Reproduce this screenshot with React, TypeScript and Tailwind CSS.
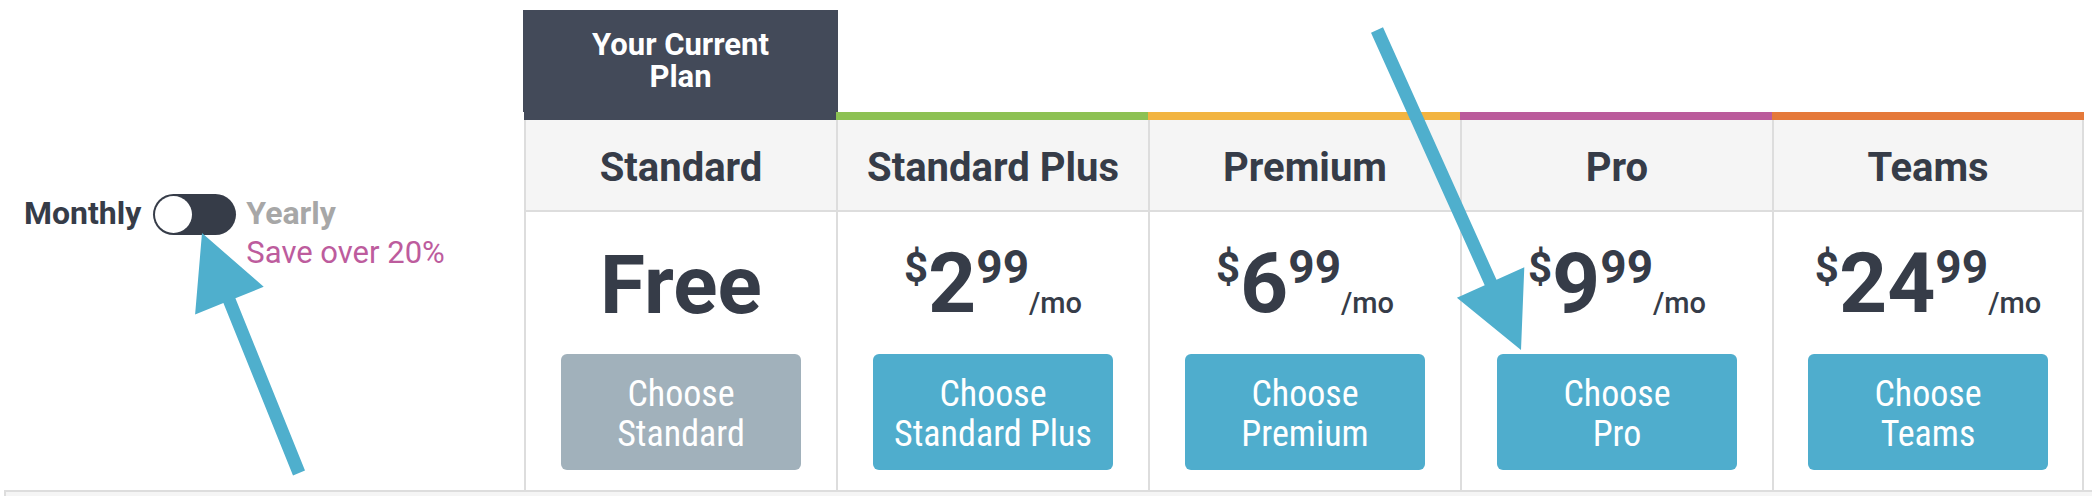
import React from 'react';

type Plan = {
  name: string;
  strip: string;
  dollars?: string;
  cents?: string;
  current?: boolean;
};

const plans: Plan[] = [
  { name: 'Standard', strip: 'bg-[#434a59]', current: true },
  { name: 'Standard Plus', strip: 'bg-[#8dc153]', dollars: '2', cents: '99' },
  { name: 'Premium', strip: 'bg-[#f2b441]', dollars: '6', cents: '99' },
  { name: 'Pro', strip: 'bg-[#bb5b9b]', dollars: '9', cents: '99' },
  { name: 'Teams', strip: 'bg-[#e5793a]', dollars: '24', cents: '99' },
];

function Price({ plan }: { plan: Plan }) {
  if (!plan.dollars) {
    return (
      <div className="flex h-[84px] items-start justify-center">
        <span className="mt-[2px] text-[82px] font-bold leading-none">Free</span>
      </div>
    );
  }
  return (
    <div className="flex h-[84px] items-start justify-center leading-none">
      <span className="mt-[5px] text-[42px] font-bold">$</span>
      <span className="text-[84px] font-bold">{plan.dollars}</span>
      <span className="mt-[2px] text-[46px] font-bold">{plan.cents}</span>
      <span className="mt-[47px] text-[29px] font-medium">/mo</span>
    </div>
  );
}

function PlanColumn({ plan, last }: { plan: Plan; last: boolean }) {
  const side = last ? 'border-l-2 border-r-2' : 'border-l-2';
  return (
    <div className="flex flex-col">
      <div className="mt-[10px] h-[102px]">
        {plan.current && (
          <div className="-ml-[1px] flex h-full w-[315px] flex-col items-center justify-center bg-[#434a59] text-center text-[31px] font-bold leading-[32px] text-white">
            <span>Your Current</span>
            <span>Plan</span>
          </div>
        )}
      </div>
      <div className={`h-[8px] ${plan.strip}`} />
      <div className={`flex h-[92px] items-center justify-center border-b-2 border-[#dddddd] bg-[#f5f5f5] pt-[6px] text-[40px] font-bold text-[#363c48] ${side}`}>
        {plan.name}
      </div>
      <div className={`flex h-[278px] flex-col items-center border-[#dddddd] pt-[30px] text-[#363c48] ${side}`}>
        <Price plan={plan} />
        <button
          className={`mt-[28px] flex h-[116px] w-[240px] flex-col items-center justify-center rounded-[6px] pt-[4px] font-['Roboto_Condensed','Liberation_Sans_Narrow','Roboto',sans-serif] text-[36px] font-normal leading-[40px] text-white ${
            plan.current ? 'bg-[#a1b1bb]' : 'bg-[#4fadcd]'
          }`}
        >
          <span>Choose</span>
          <span>{plan.name}</span>
        </button>
      </div>
    </div>
  );
}

export default function App() {
  return (
    <div className="relative h-[496px] w-[2092px] overflow-hidden bg-white font-['Roboto','Liberation_Sans',sans-serif]">
      <div className="flex h-[490px]">
        <div className="w-[524px] shrink-0 pl-[24px] pt-[193px]">
          <div className="flex items-start leading-[40px]">
            <span className="text-[32px] font-bold text-[#363c48]">Monthly</span>
            <div className="ml-[12px] mr-[10px] mt-[1px] flex h-[41px] w-[83px] items-center rounded-full bg-[#363c48] p-[2px]">
              <div className="h-[37px] w-[37px] rounded-full bg-white" />
            </div>
            <div className="flex flex-col">
              <span className="text-[32px] font-bold text-[#a7a7a7]">Yearly</span>
              <span className="text-[31px] text-[#bd5c9d]">Save over 20%</span>
            </div>
          </div>
        </div>
        <div className="grid w-[1560px] grid-cols-5">
          {plans.map((p, i) => (
            <PlanColumn key={p.name} plan={p} last={i === plans.length - 1} />
          ))}
        </div>
      </div>
      <div className="ml-[4px] h-[6px] border-l-2 border-t-2 border-[#dddddd] bg-[#f5f5f5]" />

      {/* annotation arrows */}
      <svg className="pointer-events-none absolute left-0 top-0" width="2092" height="496" viewBox="0 0 2092 496">
        <polygon
          fill="#4fafcd"
          points="202,233 263.7,286.8 235.4,298.3 305,470.6 293,475.4 223.4,303.1 195.1,314.6"
        />
        <polygon
          fill="#4fafcd"
          points="1521,350 1524.3,267.3 1496.5,279.8 1383,27.3 1371,32.7 1484.7,285.2 1456.9,297.7"
        />
      </svg>
    </div>
  );
}
